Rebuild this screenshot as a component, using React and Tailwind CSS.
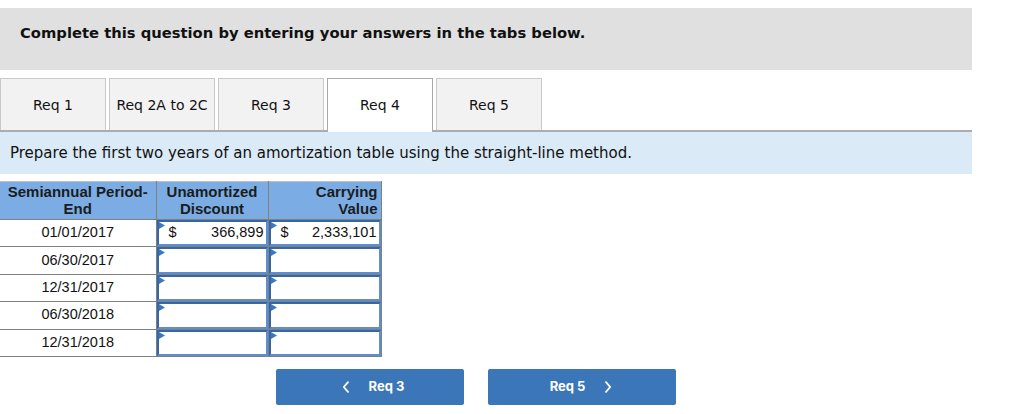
import React from "react";

const verdana = "font-['DejaVu_Sans','Verdana',sans-serif]";
const arial = "font-['Liberation_Sans','Arial',sans-serif]";

function Tri() {
  return (
    <svg className="absolute left-0 top-0" width="6" height="8" viewBox="0 0 6 8">
      <polygon points="0,0 6,3.5 0,7" fill="#3b78c4" />
    </svg>
  );
}

function InputCell({ dollar, value }) {
  return (
    <td className="border border-[#7f7f7f] p-0">
      <div className="relative h-[26.4px] border-2 border-t-[#3567a8] border-l-[#3567a8] border-r-[#5d8fd0] border-b-[#5d8fd0] bg-white flex items-center justify-between px-[10px] pr-[2px] text-[14.5px] text-[#111]">
        <Tri />
        {dollar ? <span>$</span> : null}
        {value ? <span>{value}</span> : null}
      </div>
    </td>
  );
}

export default function App() {
  const tabs = ["Req 1", "Req 2A to 2C", "Req 3", "Req 4", "Req 5"];
  const dates = ["01/01/2017", "06/30/2017", "12/31/2017", "06/30/2018", "12/31/2018"];
  return (
    <div className={`w-[1024px] h-[414px] bg-white overflow-hidden ${verdana} text-[#111]`}>
      <div className="pt-2">
        <div className="w-[972px] h-[62px] bg-[#e0e0e0] pl-5 pt-[15px] font-bold text-[14.75px] leading-[20px] text-[#111]">
          Complete this question by entering your answers in the tabs below.
        </div>
      </div>

      <div className="mt-2 w-[972px] h-[54px] flex items-end gap-[3px] border-b-2 border-[#acacac]">
        {tabs.map((t, i) =>
          i === 3 ? (
            <div
              key={t}
              className="w-[106px] h-[54px] -mb-[2px] bg-white border border-b-0 border-[#a9a9a9] flex items-center justify-center text-[14px]"
            >
              {t}
            </div>
          ) : (
            <div
              key={t}
              className="w-[106px] h-[52px] bg-[#f2f2f2] border border-b-0 border-[#c9c9c9] flex items-center justify-center text-[14px] pt-[2px]"
            >
              {t}
            </div>
          )
        )}
      </div>

      <div className="w-[972px] h-[42px] bg-[#dbeaf7] flex items-center pl-[10px] text-[15px]">
        Prepare the first two years of an amortization table using the straight-line method.
      </div>

      <div className="mt-[7px]">
        <table className={`border-collapse table-fixed w-[381px] ${arial}`}>
          <colgroup>
            <col className="w-[156px]" />
            <col className="w-[112px]" />
            <col className="w-[113px]" />
          </colgroup>
          <thead>
            <tr className="h-[38px] bg-[#7badE4] text-[15px] font-bold leading-[17px] text-[#1c1c1c]">
              <th className="border border-[#7f7f7f] border-l-0 border-t-[#bdbdbd] text-center font-bold pb-[2px]">
                Semiannual Period-
                <br />
                End
              </th>
              <th className="border border-[#7f7f7f] border-t-[#bdbdbd] text-center font-bold pb-[2px]">
                Unamortized
                <br />
                Discount
              </th>
              <th className="border border-[#7f7f7f] border-t-[#bdbdbd] text-right pr-[3px] font-bold pb-[2px]">
                Carrying
                <br />
                Value
              </th>
            </tr>
          </thead>
          <tbody>
            {dates.map((d, i) => (
              <tr key={d}>
                <td className="border border-[#7f7f7f] border-l-0 text-center text-[14.5px] text-[#111] p-0">
                  {d}
                </td>
                {i === 0 ? (
                  <>
                    <InputCell dollar value="366,899" />
                    <InputCell dollar value="2,333,101" />
                  </>
                ) : (
                  <>
                    <InputCell />
                    <InputCell />
                  </>
                )}
              </tr>
            ))}
          </tbody>
        </table>
      </div>

      <div className="mt-[12px] flex gap-[24px] pl-[276px] font-['Inter',sans-serif]">
        <button className="w-[188px] h-[36px] bg-[#3b76b9] rounded-[2px] text-white text-[13px] font-bold flex items-center justify-center gap-[19px] pl-[6px]">
          <svg width="8" height="12" viewBox="0 0 8 12" fill="none">
            <path d="M6 1.2 L1.8 6 L6 10.8" stroke="white" strokeWidth="1.8" strokeLinecap="round" strokeLinejoin="round" />
          </svg>
          <span>Req 3</span>
        </button>
        <button className="w-[188px] h-[36px] bg-[#3b76b9] rounded-[2px] text-white text-[13px] font-bold flex items-center justify-center gap-[19px] pr-[2px]">
          <span>Req 5</span>
          <svg width="8" height="12" viewBox="0 0 8 12" fill="none">
            <path d="M2 1.2 L6.2 6 L2 10.8" stroke="white" strokeWidth="1.8" strokeLinecap="round" strokeLinejoin="round" />
          </svg>
        </button>
      </div>
    </div>
  );
}
